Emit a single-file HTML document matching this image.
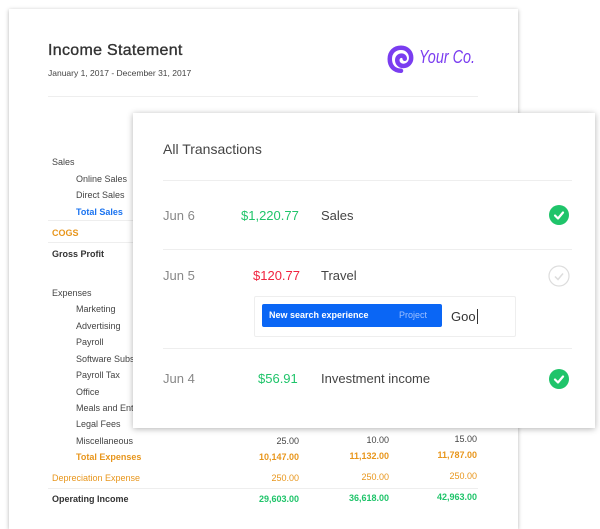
<!DOCTYPE html>
<html><head><style>
*{margin:0;padding:0;box-sizing:border-box}
body{width:600px;height:509px;background:#fff;position:relative;overflow:hidden;font-family:"Liberation Sans",sans-serif;color:#333}
.a{position:absolute;white-space:nowrap}
.paper{position:absolute;left:9px;top:9px;width:509px;height:520px;background:#fff;box-shadow:0 1px 4px rgba(0,0,0,.3)}
.s{font-size:9px;color:#444}
.o{color:#e8961c}.g{color:#1fc46a}.b{color:#1a73f0}
.bold{font-weight:bold}
.n{text-align:right;width:70px}
.card{position:absolute;left:133px;top:113px;width:462px;height:315px;background:#fff;box-shadow:0 1px 6px rgba(0,0,0,.3)}
.hr{position:absolute;height:1px;background:#eee}
.chk{position:absolute;width:20px;height:20px;border-radius:50%;background:#1fc46a}
</style></head><body>
<div class="paper"></div>
<div class="a" style="left:48px;top:42px;font-size:16px;color:#333;letter-spacing:.3px;-webkit-text-stroke:.35px #333">Income Statement</div>
<div class="a" style="left:48px;top:68px;font-size:8.5px;color:#444">January 1, 2017 - December 31, 2017</div>
<svg class="a" style="left:386px;top:44px" width="30" height="30" viewBox="0 0 28 28"><path d="M14 25C7.5 25 3.5 20.5 3.5 14C3.5 7.5 8 3.5 14 3.5C19.5 3.5 23.5 7.5 23.5 13C23.5 17 20.5 20.5 16 20.5C12.8 20.5 10.5 18 10.5 15C10.5 12.8 12.2 10.8 14.5 10.8C16.2 10.8 17.5 12 17.5 13.8" fill="none" stroke="#7a3df0" stroke-width="4.2" stroke-linecap="round"/></svg>
<div class="a" style="left:419px;top:47px;font-size:18px;color:#7a3df0;font-style:italic;transform:scaleX(.8);transform-origin:left top">Your Co.</div>
<div class="hr" style="left:48px;top:96px;width:430px"></div>
<div class="a s" style="left:52px;top:157px">Sales</div>
<div class="a s" style="left:76px;top:174px">Online Sales</div>
<div class="a s" style="left:76px;top:190px">Direct Sales</div>
<div class="a s b bold" style="left:76px;top:207px">Total Sales</div>
<div class="hr" style="left:48px;top:220px;width:90px"></div>
<div class="a s o bold" style="left:52px;top:228px">COGS</div>
<div class="hr" style="left:48px;top:242px;width:90px"></div>
<div class="a s bold" style="left:52px;top:249px;color:#333">Gross Profit</div>
<div class="a s" style="left:52px;top:288px">Expenses</div>
<div class="a s" style="left:76px;top:304px">Marketing</div>
<div class="a s" style="left:76px;top:321px">Advertising</div>
<div class="a s" style="left:76px;top:337px">Payroll</div>
<div class="a s" style="left:76px;top:354px">Software Subscriptions</div>
<div class="a s" style="left:76px;top:370px">Payroll Tax</div>
<div class="a s" style="left:76px;top:387px">Office</div>
<div class="a s" style="left:76px;top:403px">Meals and Entertainment</div>
<div class="a s" style="left:76px;top:419px">Legal Fees</div>
<div class="a s" style="left:76px;top:436px">Miscellaneous</div>
<div class="a s n" style="left:229px;top:436px">25.00</div>
<div class="a s n" style="left:319px;top:435px">10.00</div>
<div class="a s n" style="left:407px;top:434px">15.00</div>
<div class="a s o bold" style="left:76px;top:452px">Total Expenses</div>
<div class="a s o bold n" style="left:229px;top:452px">10,147.00</div>
<div class="a s o bold n" style="left:319px;top:451px">11,132.00</div>
<div class="a s o bold n" style="left:407px;top:450px">11,787.00</div>
<div class="a s o" style="left:52px;top:473px">Depreciation Expense</div>
<div class="a s o n" style="left:229px;top:473px">250.00</div>
<div class="a s o n" style="left:319px;top:472px">250.00</div>
<div class="a s o n" style="left:407px;top:471px">250.00</div>
<div class="hr" style="left:48px;top:488px;width:430px"></div>
<div class="a s bold" style="left:52px;top:494px;color:#333">Operating Income</div>
<div class="a s g bold n" style="left:229px;top:494px">29,603.00</div>
<div class="a s g bold n" style="left:319px;top:493px">36,618.00</div>
<div class="a s g bold n" style="left:407px;top:492px">42,963.00</div>

<div class="card"></div>
<div class="a" style="left:163px;top:141px;font-size:14px;color:#444">All Transactions</div>
<div class="hr" style="left:163px;top:180px;width:409px"></div>
<div class="a" style="left:163px;top:208px;font-size:13px;color:#888">Jun 6</div>
<div class="a g" style="left:241px;top:208px;font-size:13px">$1,220.77</div>
<div class="a" style="left:321px;top:208px;font-size:13px;color:#444">Sales</div>
<div class="chk" style="left:549px;top:205px"></div>
<svg class="a" style="left:549px;top:205px" width="20" height="20"><path d="M6 10.5l3 3 5-6" fill="none" stroke="#fff" stroke-width="2.2" stroke-linecap="round" stroke-linejoin="round"/></svg>
<div class="hr" style="left:163px;top:249px;width:409px"></div>
<div class="a" style="left:163px;top:268px;font-size:13px;color:#888">Jun 5</div>
<div class="a" style="left:253px;top:268px;font-size:13px;color:#f0233f">$120.77</div>
<div class="a" style="left:321px;top:268px;font-size:13px;color:#444">Travel</div>
<svg class="a" style="left:548px;top:265px" width="22" height="22"><circle cx="11" cy="11" r="10" fill="none" stroke="#ddd" stroke-width="1.2"/><path d="M7 11.5l3 3 5-6" fill="none" stroke="#ddd" stroke-width="1.5"/></svg>
<div class="a" style="left:254px;top:296px;width:262px;height:41px;border:1px solid #eee;border-radius:2px"></div>
<div class="a" style="left:262px;top:304px;width:180px;height:23px;background:#0a66f5;border-radius:2px"></div>
<div class="a" style="left:269px;top:310px;font-size:9px;color:#fff;font-weight:bold">New search experience</div>
<div class="a" style="left:399px;top:310px;font-size:9px;color:#9ec0ff">Project</div>
<div class="a" style="left:451px;top:309px;font-size:13px;color:#333">Goo<span style="border-left:1px solid #333;margin-left:1px"></span></div>
<div class="hr" style="left:163px;top:348px;width:409px"></div>
<div class="a" style="left:163px;top:371px;font-size:13px;color:#888">Jun 4</div>
<div class="a g" style="left:258px;top:371px;font-size:13px">$56.91</div>
<div class="a" style="left:321px;top:371px;font-size:13px;color:#444">Investment income</div>
<div class="chk" style="left:549px;top:369px"></div>
<svg class="a" style="left:549px;top:369px" width="20" height="20"><path d="M6 10.5l3 3 5-6" fill="none" stroke="#fff" stroke-width="2.2" stroke-linecap="round" stroke-linejoin="round"/></svg>
</body></html>
